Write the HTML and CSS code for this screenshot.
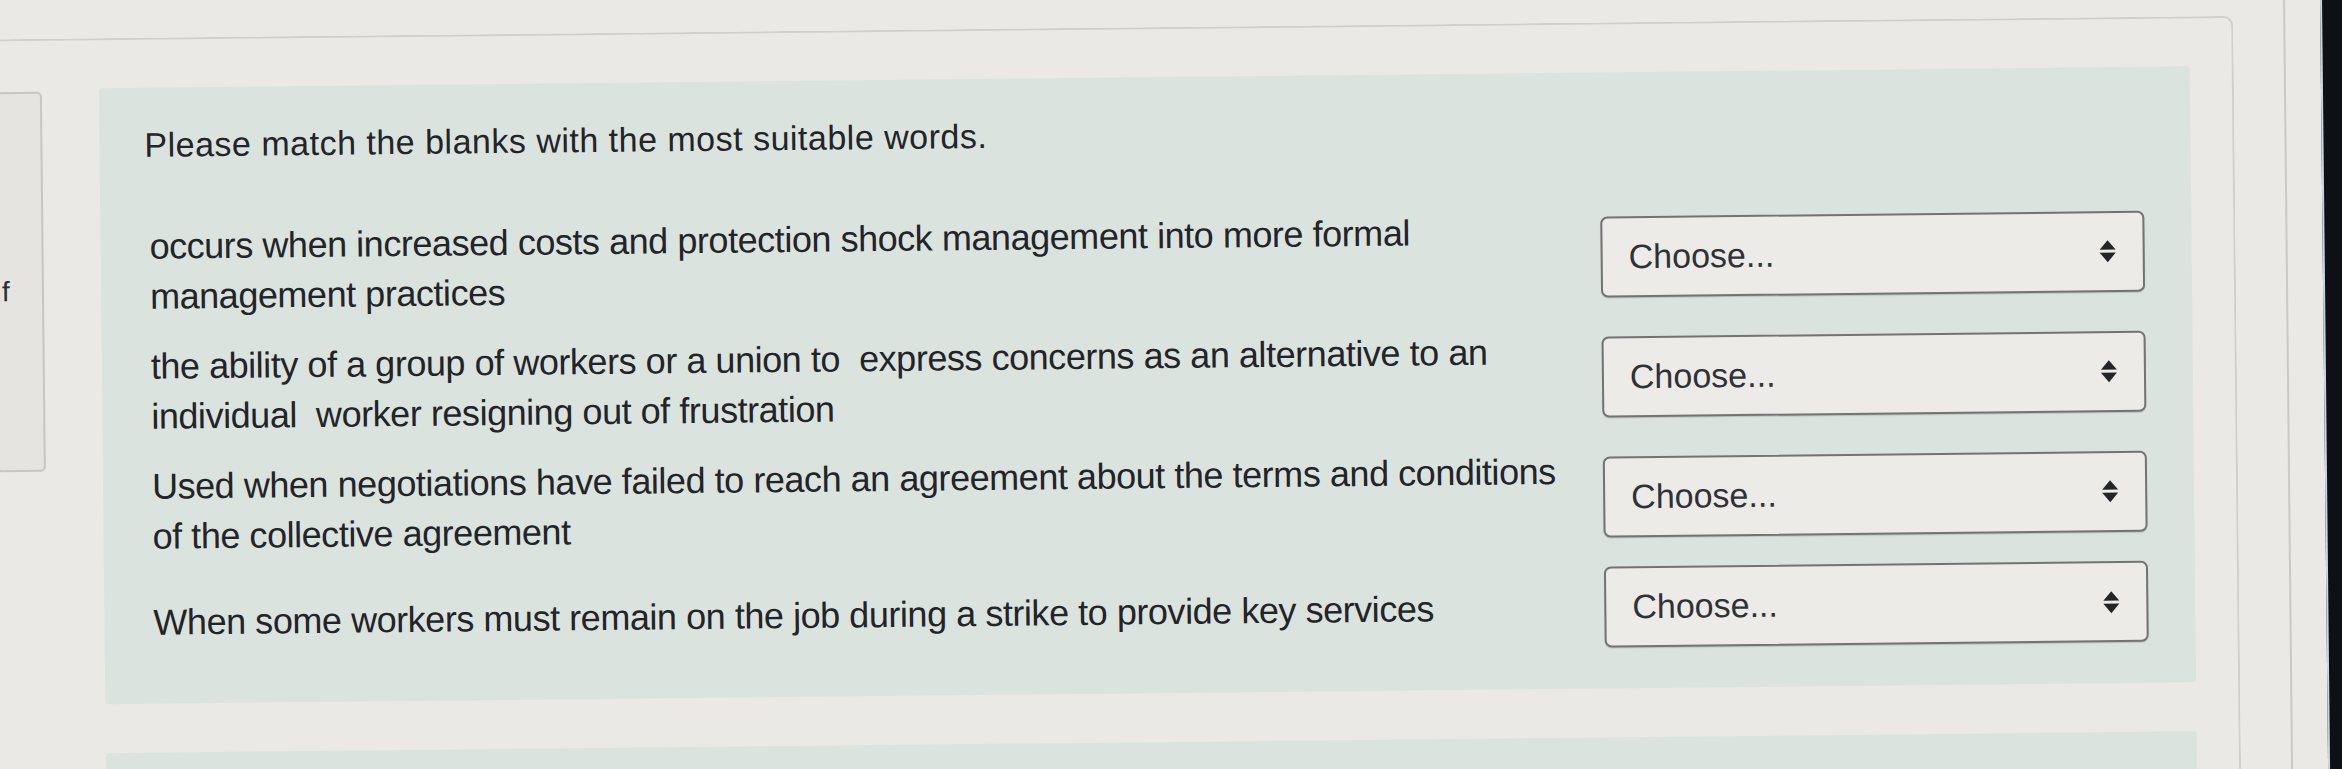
FILE: index.html
```html
<!DOCTYPE html>
<html lang="en">
<head>
<meta charset="utf-8">
<title>Matching question</title>
<link rel="stylesheet" href="styles.css">
</head>
<body>
<div class="scene">
  <div class="card">
    <aside class="info"><span class="info-text">f</span></aside>
    <main class="questions">
      <section class="panel panel-main">
        <p class="title">Please match the blanks with the most suitable words.</p>
        <div class="rows">
          <div class="row">
            <div class="prompt">occurs when increased costs and protection shock management into more formal<br>management practices</div>
            <div class="select"><span>Choose...</span><svg viewBox="0 0 18 24" aria-hidden="true"><path d="M1 10.5 L9 1 L17 10.5 Z"/><path d="M1 13.5 L9 23 L17 13.5 Z"/></svg></div>
          </div>
          <div class="row">
            <div class="prompt">the ability of a group of workers or a union to&nbsp; express concerns as an alternative to an<br>individual&nbsp; worker resigning out of frustration</div>
            <div class="select"><span>Choose...</span><svg viewBox="0 0 18 24" aria-hidden="true"><path d="M1 10.5 L9 1 L17 10.5 Z"/><path d="M1 13.5 L9 23 L17 13.5 Z"/></svg></div>
          </div>
          <div class="row">
            <div class="prompt">Used when negotiations have failed to reach an agreement about the terms and conditions<br>of the collective agreement</div>
            <div class="select"><span>Choose...</span><svg viewBox="0 0 18 24" aria-hidden="true"><path d="M1 10.5 L9 1 L17 10.5 Z"/><path d="M1 13.5 L9 23 L17 13.5 Z"/></svg></div>
          </div>
          <div class="row">
            <div class="prompt">When some workers must remain on the job during a strike to provide key services</div>
            <div class="select"><span>Choose...</span><svg viewBox="0 0 18 24" aria-hidden="true"><path d="M1 10.5 L9 1 L17 10.5 Z"/><path d="M1 13.5 L9 23 L17 13.5 Z"/></svg></div>
          </div>
        </div>
      </section>
      <section class="panel panel-next"></section>
    </main>
  </div>
  <div class="gutter"></div>
  <div class="gap"></div>
  <div class="bezel"></div>
</div>
</body>
</html>
```

FILE: styles.css
```css
html, body {
  margin: 0;
  padding: 0;
}

body {
  width: 2342px;
  height: 769px;
  overflow: hidden;
  background: #eae9e6;
  font-family: "Liberation Sans", Arial, Helvetica, sans-serif;
  color: #222428;
}

.scene {
  display: flex;
  width: 2440px;
  height: 829px;
  margin-top: -30px;
  transform: rotate(-0.6deg);
  transform-origin: 1171px 414px;
}

.card {
  flex: none;
  width: 2237px;
  box-sizing: border-box;
  margin-top: 57px;
  border-top: 2px solid #cfcfcb;
  border-right: 2px solid #cfcfcb;
  border-top-right-radius: 10px;
  display: flex;
  align-items: flex-start;
}

.info {
  flex: none;
  box-sizing: border-box;
  width: 49px;
  height: 380px;
  margin: 51px 0 0 -4px;
  padding: 180px 0 0 5px;
  border: 2px solid #c6c6c2;
  border-radius: 5px;
  background: #e5e4e1;
  display: flex;
  align-items: flex-start;
  font-size: 28px;
  line-height: 36px;
  color: #2c2d31;
}

.questions {
  flex: none;
  width: 2091px;
  margin: 48px 0 0 57px;
  display: flex;
  flex-direction: column;
  gap: 49px;
}

.panel {
  background: #dbe3df;
  border-radius: 3px;
  box-sizing: border-box;
}

.panel-main {
  height: 616px;
  padding: 37px 47px 0 45px;
}

.panel-next {
  height: 200px;
}

.title {
  margin: 0;
  font-size: 34px;
  line-height: 40px;
  letter-spacing: 0.5px;
  font-weight: 400;
}

.rows {
  margin-top: 57px;
  display: flex;
  flex-direction: column;
  gap: 20px;
}

.row {
  display: flex;
  align-items: center;
}

.prompt {
  flex: 1;
  padding-left: 4px;
  font-size: 36px;
  line-height: 50px;
  letter-spacing: -0.45px;
  white-space: nowrap;
}

.select {
  flex: none;
  width: 544px;
  height: 81px;
  box-sizing: border-box;
  padding: 0 26px;
  border: 2px solid #737373;
  border-radius: 7px;
  background: #ecebe8;
  box-shadow: 0 1px 1px rgba(0, 0, 0, 0.15);
  display: flex;
  align-items: center;
  justify-content: space-between;
  font-size: 34px;
  color: #303136;
}

.select svg {
  width: 18px;
  height: 24px;
  fill: #222428;
}

.gutter {
  flex: none;
  width: 50px;
  border-right: 2px solid #c9c9c5;
}

.gap {
  flex: none;
  width: 35px;
}

.bezel {
  flex: none;
  width: 120px;
  background: #0d1015;
  border-left: 2px solid #c9d5e3;
}
```
